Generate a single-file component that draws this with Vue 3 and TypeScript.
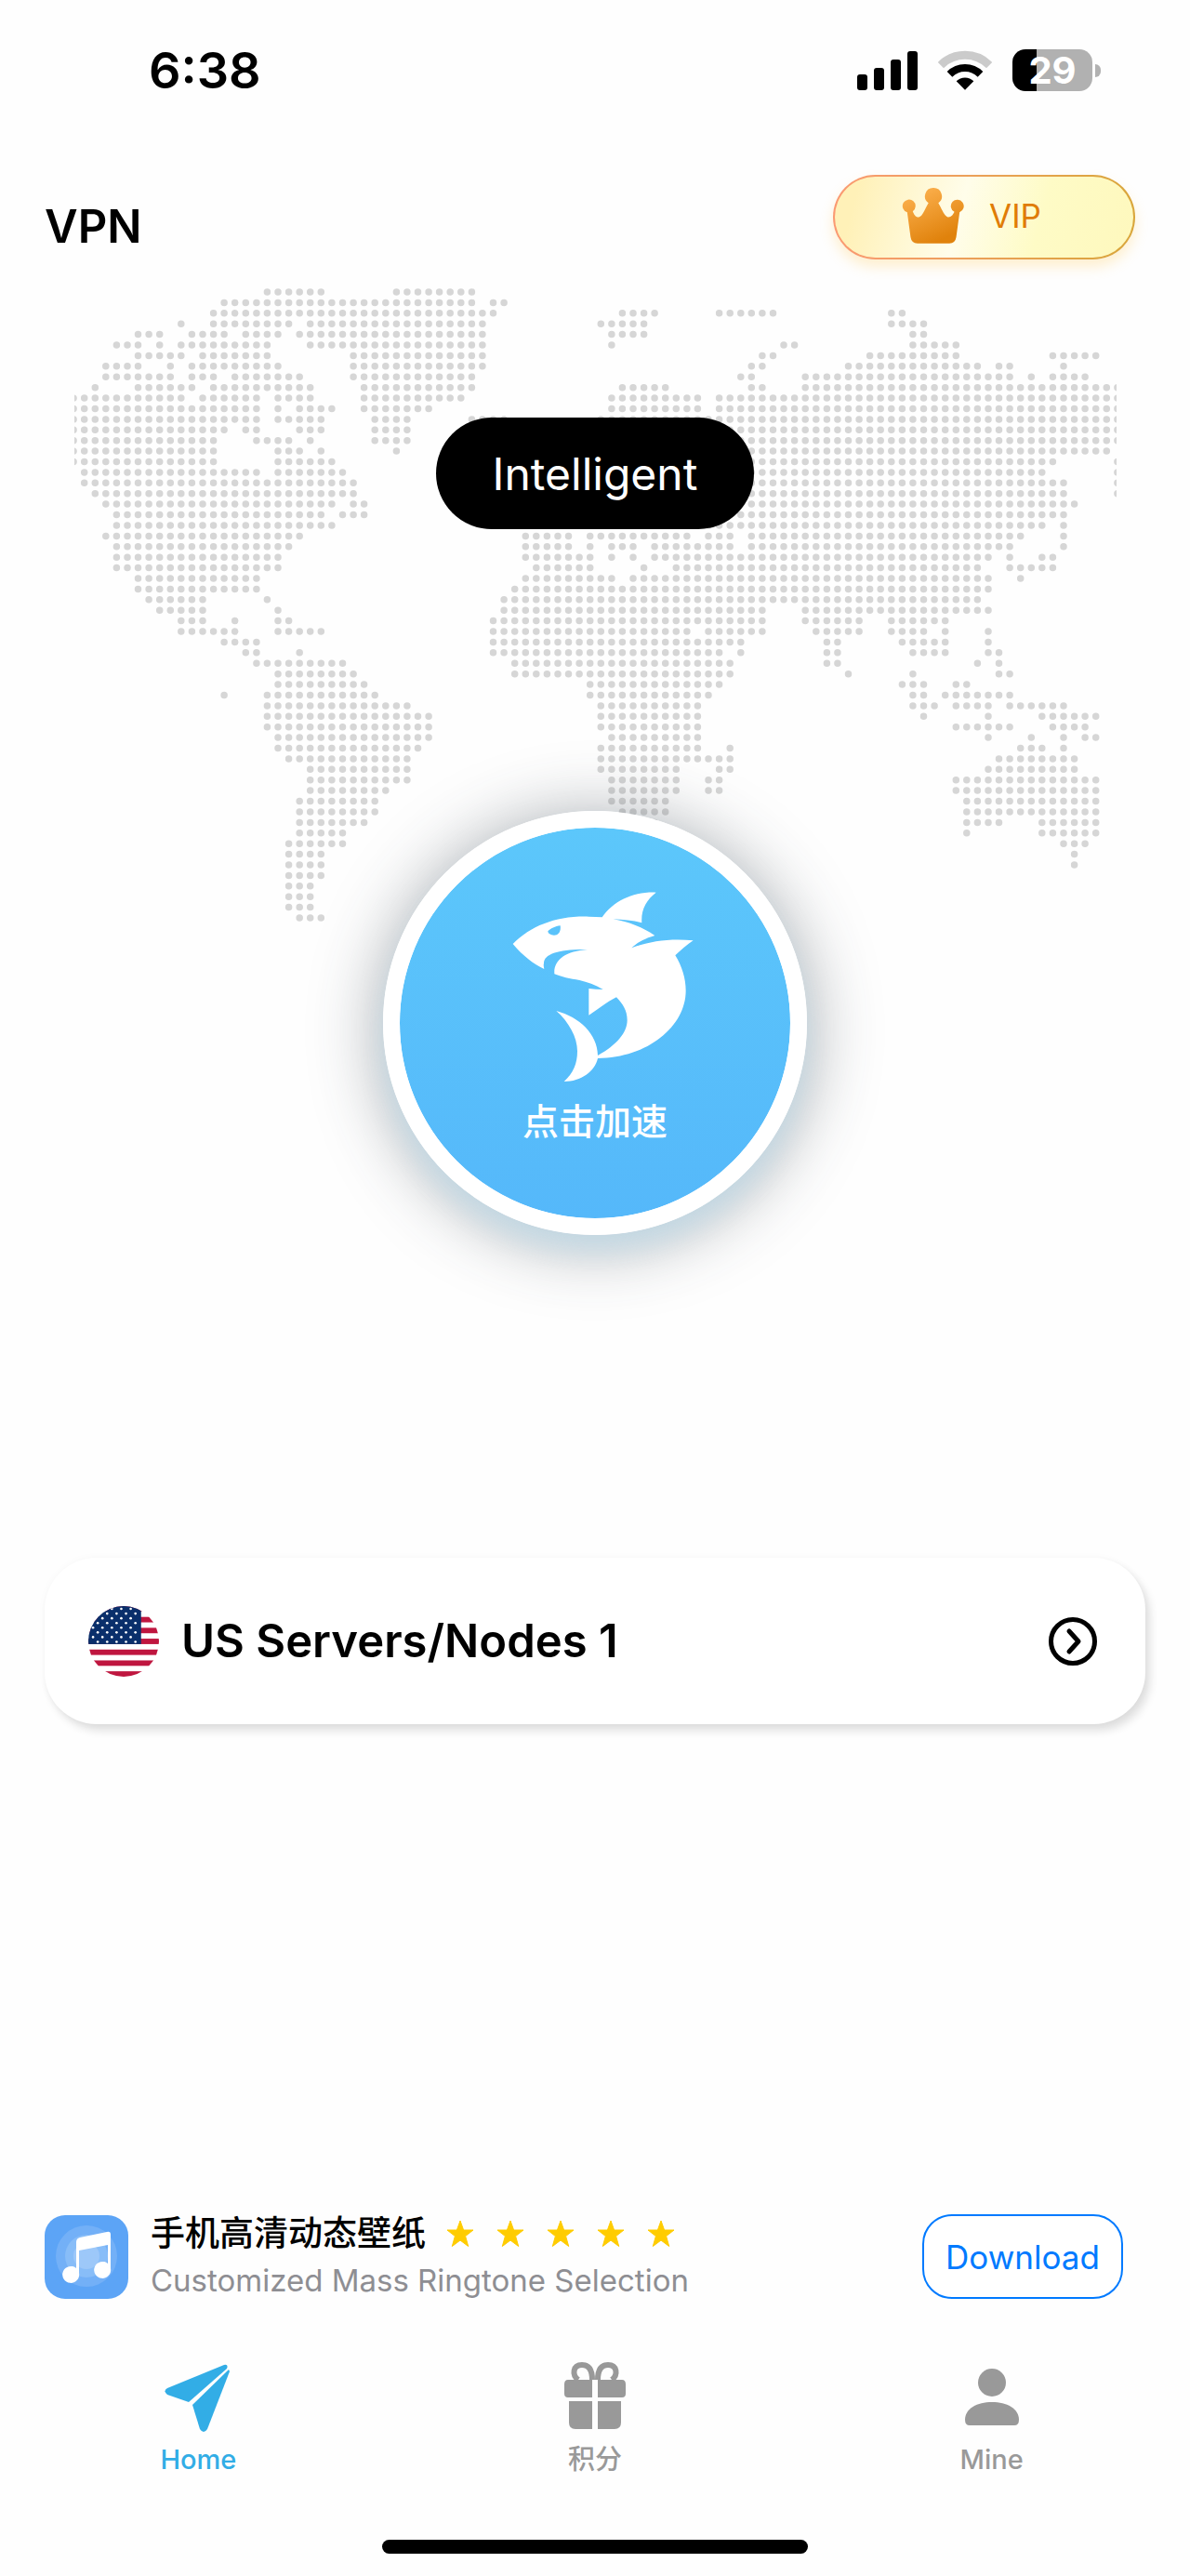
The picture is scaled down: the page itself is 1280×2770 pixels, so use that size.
<script setup lang="ts">
import { ref } from 'vue'

type Run = [number, number]

// Each row of the dotted world map, as inclusive runs of columns.
const mapRows: string[] = [
  '18-23 30-37',
  '14-37 39-40',
  '13-39 51-54 60-65 76-77',
  '10 13-20 22-38 49-53 76-79',
  '6-8 11-14 16-19 21-38 50-53 78-79',
  '4-6 8 10-18 22-38 50 66-67 78-82',
  '6-10 12-18 26-38 64-65 74-82 91-95',
  '3-6 9 11-19 26-38 63-64 72-84 86-87 92',
  '3-9 11-13 15-21 26-37 62-63 68-87 89 91-94',
  '2 6-11 13-22 27-37 51-55 63-64 68-97',
  '0-10 12-17 19-22 27-36 50-58 60-97',
  '0-17 19 21-24 27-33 50-58 60-97',
  '0-17 19-23 28-31 37-40 49-97',
  '0-14 16-17 21-23 28-31 50-97',
  '0-13 17-20 22 28-31 50-97',
  '0-13 19-21 23 30 50-96',
  '0-13 19-24 50-91 97',
  '1-17 19-25 50-90 97',
  '1-26 50-92 97',
  '2-26 50-92 97',
  '3-24 26-27 50-93',
  '4-23 25-27 46-92',
  '4-24 44-90 92',
  '3-21 42-46 48-57 59-61 63-88 92',
  '4-20 42-46 48 50-52 54-61 63-87 92',
  '4-19 42-48 50 52 54-85 87 90-91',
  '4-19 43-48 53 56-84 87-91',
  '6-17 42-50 52-85 88',
  '6-17 41-85',
  '7-12 18 40-84',
  '8-12 19 40-64 68-85',
  '10-12 15 19-20 39-64 68-73 76-81',
  '10-15 19-23 39-57 59-64 69-73 76-79 81 85',
  '14-17 39-62 70-71 77-81 85',
  '16-17 21 39-60 62 70-71 78-81 85-86',
  '17-25 41-61 70-71 84 86',
  '19-26 41-61 72 78 86-87',
  '19-27 48-60 77-79 82-83',
  '14 18-28 48-59 78-79 81-87',
  '18-31 49-58 78-80 82-85 87-92',
  '18-33 49-58 79 85 90-95',
  '18-33 49-58 82-87 91-94',
  '19-33 50-58 85 89 92 94-95',
  '19-32 49-58 61 88-90 92',
  '20-31 49-61 86-93',
  '22-31 49-56 60-61 85-93',
  '22-31 50-56 59-60 82-95',
  '22-29 50-56 59-60 82-95',
  '21-28 50-55 83-95',
  '21-28 51-55 83-95',
  '21-27 53-54 83-86 90-95',
  '21-25 83 90-95',
  '20-25 92-94',
  '20-23 93',
  '20-23 93',
  '20-23',
  '20-22',
  '20-22',
  '20-22',
  '21-23',
]

function parseRuns(row: string): Run[] {
  return row.split(' ').map((part) => {
    const [from, to] = part.split('-').map(Number)
    return [from, to ?? from] as Run
  })
}

// Zero-length segments: the round line cap turns each one into a dot.
const mapPath = mapRows
  .map((row, r) =>
    parseRuns(row)
      .map(([from, to]) => {
        let d = ''
        for (let c = from; c <= to; c++) {
          d += `M${(c * 11.575 - 0.9).toFixed(1)} ${(35 + r * 11.407).toFixed(1)}h0`
        }
        return d
      })
      .join(''),
  )
  .join('')

const stripes = [0, 2, 4, 6, 8, 10, 12]
const flagStars: { x: number; y: number }[] = []
for (let r = 0; r < 8; r++) {
  for (let c = 0; c < 6; c++) {
    flagStars.push({ x: 5 + c * 10 + (r % 2) * 5, y: 3 + r * 5 })
  }
}

const tabs = [
  { id: 'home', label: 'Home' },
  { id: 'points', label: '积分' },
  { id: 'mine', label: 'Mine' },
]
const activeTab = ref('home')
</script>

<template>
  <div class="screen">
    <div class="status">
      <span class="clock">6:38</span>
      <div class="indicators">
        <svg class="signal" viewBox="0 0 65 42" aria-label="Signal">
          <rect x="0" y="25" width="11" height="17" rx="3" />
          <rect x="18" y="18" width="11" height="24" rx="3" />
          <rect x="36" y="9" width="11" height="33" rx="3" />
          <rect x="54" y="0" width="11" height="42" rx="3" />
        </svg>
        <svg class="wifi" viewBox="388 70 174 129" aria-label="Wi-Fi">
          <path d="M396.500 118.500A111 111 0 0 1 553.500 118.500" fill="none" stroke="#cbcbcb" stroke-width="27" />
          <path d="M425.500 147.500A70 70 0 0 1 524.500 147.500" fill="none" stroke="#000" stroke-width="24" />
          <path d="M475 198L447 170A40 40 0 0 1 503 170Z" />
        </svg>
        <div class="battery">
          <div class="cell"><span>29</span></div>
          <i class="nub"></i>
        </div>
      </div>
    </div>

    <header class="top">
      <h1>VPN</h1>
      <button class="vip" type="button">
        <svg viewBox="270 516 204 181" aria-hidden="true">
          <defs>
            <linearGradient id="crown" x1="0" y1="0" x2="0.500" y2="1">
              <stop offset="0" stop-color="#ffb656" />
              <stop offset="1" stop-color="#e0820c" />
            </linearGradient>
          </defs>
          <path
            fill="url(#crown)"
            d="M372 516a27 27 0 0 1 16 49C400 585 406 606 419 611C430 612 436 603 440 594A21 21 0 1 1 457 595L446 676Q443 696 424 696H320Q301 696 298 676L287 595A21 21 0 1 1 305 592C309 602 314 612 325 611C337 608 344 585 356 565A27 27 0 0 1 372 516Z"
          />
        </svg>
        <span>VIP</span>
      </button>
    </header>

    <main>
      <section class="hero">
        <svg class="map" viewBox="0 0 1121 720" aria-hidden="true">
          <path :d="mapPath" />
        </svg>
        <div class="controls">
          <button class="mode" type="button">Intelligent</button>
          <button class="connect" type="button">
            <svg viewBox="90 80 591 621" aria-hidden="true">
              <path
                fill-rule="evenodd"
                d="M95 254C155 195 235 163 340 166L383 168C420 115 485 85 557 88C525 112 508 145 511 186C482 177 450 176 418 174C470 182 515 202 553 227C520 237 500 247 478 267C540 243 610 236 677 243C655 258 635 275 619 291C640 325 653 365 653 405C653 520 530 622 369 623L369 614C430 580 464 540 464 500C464 470 450 447 429 426C395 443 370 465 340 484L340 398C355 400 370 401 386 401C360 385 335 377 310 371C280 367 250 360 229 351C226 305 266 277 336 272C245 270 195 286 195 316C193 325 195 329 196 335C160 318 125 290 95 254ZM208 213C216 205 232 197 248 195C251 214 242 226 228 226C217 226 208 220 208 213Z"
              />
              <path d="M235 470C310 490 368 545 369 614L369 623C360 665 315 698 260 698C290 672 303 640 303 600C303 555 275 505 235 470Z" />
            </svg>
            <span>点击加速</span>
          </button>
        </div>
      </section>

      <button class="server" type="button">
        <svg class="flag" viewBox="0 0 75 75" aria-hidden="true">
          <clipPath id="disc"><circle cx="37.500" cy="37.500" r="37.500" /></clipPath>
          <g clip-path="url(#disc)">
            <rect width="75" height="75" fill="#fff" />
            <rect v-for="s in stripes" :key="s" x="0" :y="(s * 75) / 13" width="75" :height="75 / 13" fill="#bf163f" />
            <rect width="56" height="40.400" fill="#0a2f6b" />
            <circle v-for="(s, i) in flagStars" v-show="s.x < 55" :key="i" :cx="s.x" :cy="s.y" r="1.300" fill="#fff" />
          </g>
        </svg>
        <span>US Servers/Nodes 1</span>
        <svg class="go" viewBox="0 0 52 52" aria-hidden="true">
          <circle cx="26" cy="26" r="23.500" />
          <path d="M22 15L32 26L22 37" />
        </svg>
      </button>

      <section class="promo">
        <svg class="app-icon" viewBox="0 0 90 90" aria-hidden="true">
          <rect width="90" height="90" rx="22" fill="#5ca4f6" />
          <circle cx="45" cy="44" r="33" fill="#73b0f7" />
          <circle cx="45" cy="44" r="23" fill="#88bdf8" />
          <circle cx="45" cy="44" r="14" fill="#9dc8f9" />
          <path
            fill="#fff"
            d="M34 29Q34 25 38 24L67 18Q71 17 71 21V57A9 9 0 1 1 68 52V32L37 38V62A9 9 0 1 1 34 57Z"
          />
        </svg>
        <div class="promo-text">
          <div class="promo-title">
            <strong>手机高清动态壁纸</strong>
            <div class="stars" role="img" aria-label="5 stars">
              <svg v-for="n in 5" :key="n" viewBox="0 0 30 30">
                <path d="M15 1L18.600 11H29L20.600 17.600L23.700 28.500L15 22L6.300 28.500L9.400 17.600L1 11H11.400Z" />
              </svg>
            </div>
          </div>
          <p>Customized Mass Ringtone Selection</p>
        </div>
        <button class="download" type="button">Download</button>
      </section>
    </main>

    <nav class="tabs">
      <a
        v-for="tab in tabs"
        :key="tab.id"
        href="#"
        :class="{ active: tab.id === activeTab }"
        @click.prevent="activeTab = tab.id"
      >
        <svg v-if="tab.id === 'home'" viewBox="2 1 72 76" aria-hidden="true">
          <path d="M66 4L5 29Q0 32 5 36L28 44L69 8Q71 3 66 4Z" />
          <path d="M71 9L32 47L40 73Q44 79 48 73L72 11Z" />
        </svg>
        <svg v-else-if="tab.id === 'points'" viewBox="0 0 72 76" aria-hidden="true">
          <path
            d="M33 19C33 8 29 3 22 3C12 3 11 14 18 19M39 19C39 8 43 3 50 3C60 3 61 14 54 19"
            fill="none"
            stroke="currentColor"
            stroke-width="6"
          />
          <path d="M7 19H33V38H7Q3 38 3 34V24Q3 19 7 19ZM39 19H65Q69 19 69 24V34Q69 38 65 38H39Z" />
          <path d="M8 42H33V72H15Q8 72 8 65ZM39 42H64V65Q64 72 57 72H39Z" />
        </svg>
        <svg v-else viewBox="0 0 72 76" aria-hidden="true">
          <circle cx="36" cy="22" r="15" />
          <path d="M7 62C7 50 20 43 36 43C52 43 65 50 65 62Q65 68 60 68H12Q7 68 7 62Z" />
        </svg>
        <span>{{ tab.label }}</span>
      </a>
    </nav>
    <div class="home-bar"></div>
  </div>
</template>

<style>
body {
  margin: 0;
  background: #fefefe;
}
</style>

<style scoped>
.screen {
  font-family: Inter, 'Noto Sans CJK SC', sans-serif;
  color: #000;
  padding-bottom: 24px;
}

button {
  font: inherit;
  color: inherit;
  padding: 0;
  border: 0;
  cursor: pointer;
}

svg {
  display: block;
  flex: none;
}

.status {
  display: flex;
  align-items: center;
  justify-content: space-between;
  height: 45px;
  padding: 53px 96px 0 160px;
}

.clock {
  font-size: 54px;
  line-height: 48px;
  font-weight: 600;
}

.indicators {
  display: flex;
  align-items: center;
  gap: 22px;
}

.signal {
  width: 65px;
  height: 42px;
}

.wifi {
  width: 58px;
  height: 43px;
}

.battery {
  display: flex;
  align-items: center;
  gap: 3px;
}

.cell {
  display: flex;
  align-items: center;
  justify-content: center;
  width: 86px;
  height: 45px;
  border-radius: 14px;
  background: linear-gradient(90deg, #000 26px, #b1b1b1 26px);
  color: #fff;
  font-size: 40px;
  font-weight: 700;
}

.nub {
  width: 6px;
  height: 14px;
  border-radius: 0 7px 7px 0;
  background: #b1b1b1;
}

.top {
  display: flex;
  align-items: flex-end;
  justify-content: space-between;
  margin-top: 90px;
  padding: 0 59px 0 48px;
}

h1 {
  margin: 0;
  font-size: 49px;
  line-height: 70px;
  font-weight: 600;
}

.vip {
  display: flex;
  align-items: center;
  gap: 26px;
  width: 325px;
  height: 91px;
  padding: 0 0 3px 72px;
  border: 2px solid transparent;
  border-radius: 46px;
  background:
    linear-gradient(105deg, #fff1b8 8%, #fffdea 42%, #fefbc6 68%, #fef8bd 100%) padding-box,
    linear-gradient(90deg, #fb9a72, #d9a63a) border-box;
  box-shadow: 0 8px 14px rgba(255, 205, 100, 0.3);
  color: #e07c06;
  font-size: 35px;
}

.vip svg {
  width: 68px;
  height: 60px;
}

.hero {
  display: grid;
}

.map {
  grid-area: 1 / 1;
  align-self: start;
  margin: 0 79px 0 80px;
}

.map path {
  fill: none;
  stroke: #d6d6d6;
  stroke-width: 7.5px;
  stroke-linecap: round;
}

.controls {
  grid-area: 1 / 1;
  display: flex;
  flex-direction: column;
  align-items: center;
  gap: 303px;
  padding-top: 170px;
}

.mode {
  width: 342px;
  height: 120px;
  border-radius: 60px;
  background: #000;
  color: #fff;
  font-size: 48px;
}

.connect {
  display: flex;
  flex-direction: column;
  align-items: center;
  gap: 14px;
  width: 456px;
  height: 456px;
  box-sizing: border-box;
  padding-top: 67px;
  border: 18px solid #fff;
  border-radius: 50%;
  background: linear-gradient(#5cc7fb, #55b8fa) padding-box;
  box-shadow:
    0 18px 24px rgba(190, 230, 250, 0.45),
    0 8px 70px 8px rgba(50, 60, 70, 0.38);
  color: #fff;
  font-size: 39px;
  line-height: 56px;
  font-weight: 500;
}

.connect svg {
  width: 197px;
  height: 207px;
  margin-left: 16px;
  fill: #fff;
}

.server {
  display: flex;
  align-items: center;
  gap: 24px;
  width: calc(100% - 96px);
  height: 179px;
  margin: 347px 48px 0;
  padding: 0 52px 0 47px;
  border-radius: 56px;
  background: #fff;
  box-shadow:
    5px 7px 10px rgba(0, 0, 0, 0.12),
    0 0 8px rgba(0, 0, 0, 0.03);
  font-size: 49px;
  font-weight: 600;
}

.server span {
  flex: 1;
  text-align: left;
}

.flag {
  width: 76px;
  height: 76px;
}

.go {
  width: 52px;
  height: 52px;
  fill: none;
  stroke: #000;
  stroke-width: 5px;
  stroke-linecap: round;
  stroke-linejoin: round;
}

.promo {
  display: flex;
  align-items: center;
  margin-top: 527px;
  padding: 0 72px 0 48px;
}

.app-icon {
  width: 90px;
  height: 90px;
}

.promo-text {
  flex: 1;
  padding-left: 24px;
}

.promo-title {
  display: flex;
  align-items: center;
  gap: 22px;
  font-size: 37px;
  line-height: 42px;
}

.promo-title strong {
  font-weight: 500;
}

.stars {
  display: flex;
  gap: 24px;
}

.stars svg {
  width: 30px;
  height: 30px;
  fill: #ffcc00;
  stroke: #ffcc00;
  stroke-width: 1px;
  stroke-linejoin: round;
}

.promo p {
  margin: 9px 0 0;
  color: #8e8e93;
  font-size: 33px;
  line-height: 40px;
}

.download {
  width: 216px;
  height: 91px;
  box-sizing: border-box;
  border: 2px solid #007aff;
  border-radius: 32px;
  background: #fff;
  color: #007aff;
  font-size: 35px;
}

.tabs {
  display: grid;
  grid-template-columns: repeat(3, 1fr);
  margin-top: 68px;
}

.tabs a {
  display: flex;
  flex-direction: column;
  align-items: center;
  gap: 11px;
  color: #999;
  font-size: 29px;
  line-height: 36px;
  font-weight: 500;
  text-decoration: none;
}

.tabs a.active {
  color: #32ade6;
}

.tabs svg {
  width: 72px;
  height: 76px;
  fill: currentColor;
}

.home-bar {
  width: 458px;
  height: 15px;
  margin: 68px auto 0;
  border-radius: 8px;
  background: #000;
}
</style>
